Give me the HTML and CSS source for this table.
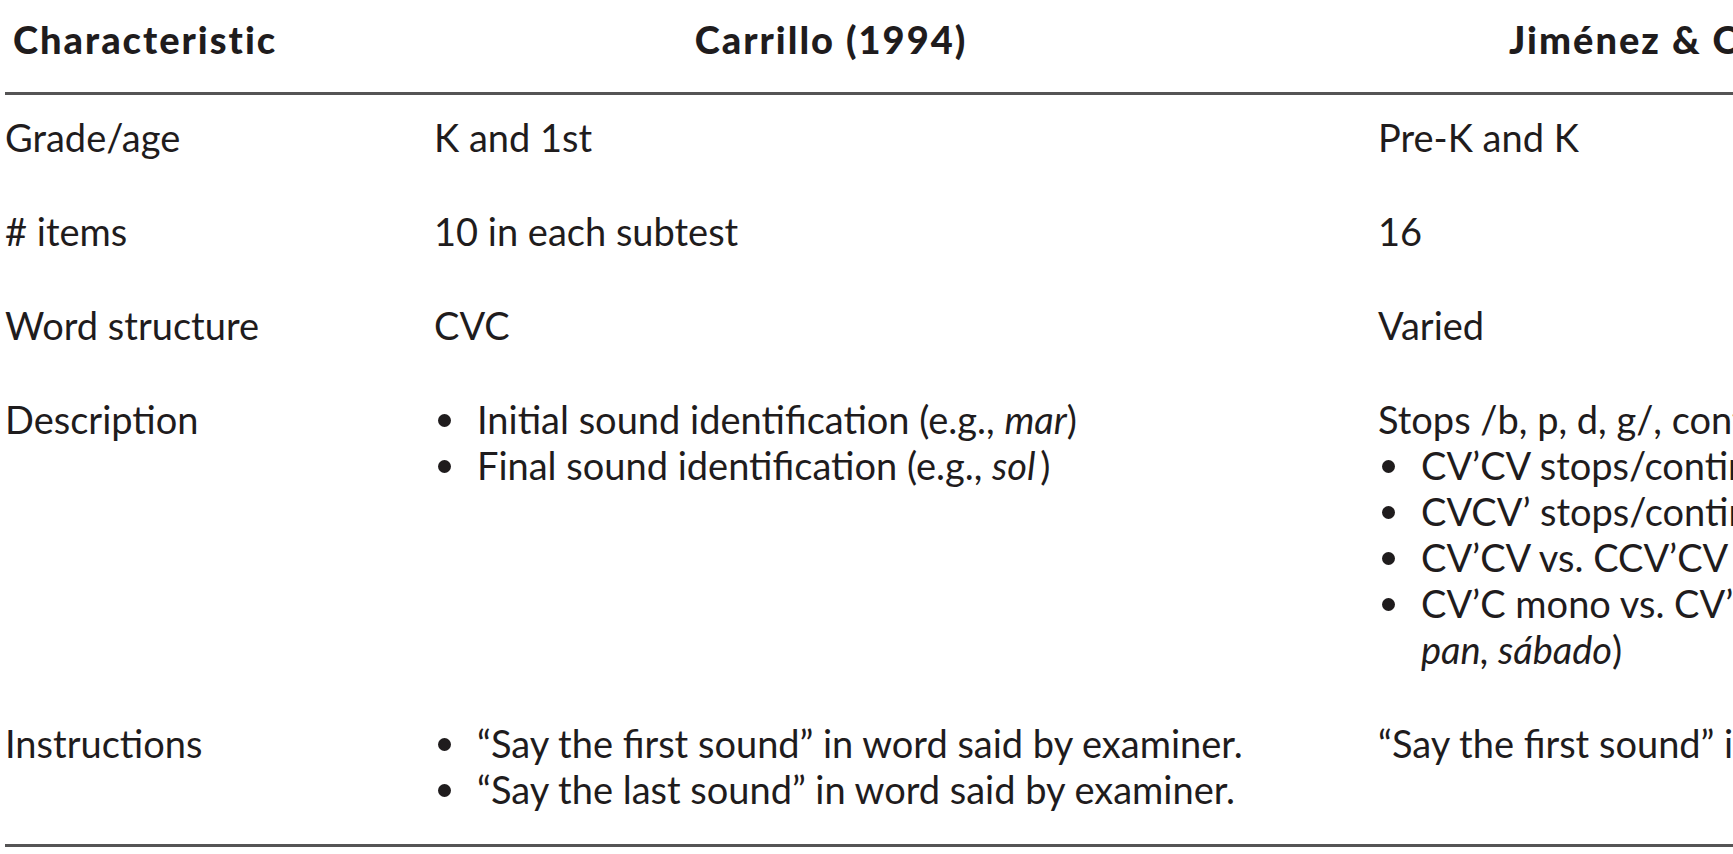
FILE: index.html
```html
<!DOCTYPE html>
<html lang="en">
<head>
<meta charset="utf-8">
<title>Phonological awareness measures</title>
<link rel="stylesheet" href="styles.css">
</head>
<body>
<div class="table">
  <div class="row head">
    <div class="cell c1">Characteristic</div>
    <div class="cell c2">Carrillo (1994)</div>
    <div class="cell c3">Jiménez &amp; Ortiz (2000)</div>
  </div>
  <div class="tbody">
    <div class="row">
      <div class="cell c1">Grade/age</div>
      <div class="cell c2">K and 1st</div>
      <div class="cell c3">Pre-K and K</div>
    </div>
    <div class="row">
      <div class="cell c1"># items</div>
      <div class="cell c2">10 in each subtest</div>
      <div class="cell c3">16</div>
    </div>
    <div class="row">
      <div class="cell c1">Word structure</div>
      <div class="cell c2">CVC</div>
      <div class="cell c3">Varied</div>
    </div>
    <div class="row">
      <div class="cell c1">Description</div>
      <div class="cell c2">
        <ul class="bullets">
          <li><span>Initial sound identification (e.g., <i>mar</i>)</span></li>
          <li><span>Final sound identification (e.g., <i>sol</i>&thinsp;)</span></li>
        </ul>
      </div>
      <div class="cell c3">
        <div class="line">Stops /b, p, d, g/, continuants /β, ð, ɣ/</div>
        <ul class="bullets">
          <li><span>CV’CV stops/continuants</span></li>
          <li><span>CVCV’ stops/continuants</span></li>
          <li><span>CV’CV vs. CCV’CV</span></li>
          <li><span>CV’C mono vs. CV’CVCV tri (e.g.,<br><i>pan, sábado</i>)</span></li>
        </ul>
      </div>
    </div>
    <div class="row">
      <div class="cell c1">Instructions</div>
      <div class="cell c2">
        <ul class="bullets">
          <li><span>“Say the first sound” in word said by examiner.</span></li>
          <li><span>“Say the last sound” in word said by examiner.</span></li>
        </ul>
      </div>
      <div class="cell c3">“Say the first sound” in word said by examiner.</div>
    </div>
  </div>
</div>
</body>
</html>
```

FILE: styles.css
```css
html, body {
  margin: 0;
  padding: 0;
  background: #ffffff;
}

body {
  color: #1f1c1d;
  font-family: Lato, "Liberation Sans", sans-serif;
  font-size: 38px;
  line-height: 46px;
  overflow: hidden;
  width: 1733px;
  height: 854px;
}

.table {
  width: 2300px;
  margin-left: 5px;
}

.row {
  display: grid;
  grid-template-columns: 429px 944px 900px;
  white-space: nowrap;
}

.head {
  font-weight: 900;
  letter-spacing: 2px;
  padding: 16px 0 30px;
  border-bottom: 3px solid #555455;
}

.head .c1 {
  padding-left: 8px;
}

.head .c2 {
  text-align: center;
  padding-right: 150px;
}

.head .c3 {
  padding-left: 131px;
}

.tbody {
  display: flex;
  flex-direction: column;
  gap: 48px;
  padding: 19px 0 32px;
  border-bottom: 3px solid #555455;
}

.bullets {
  list-style: none;
  margin: 0;
  padding: 0;
}

.bullets li {
  display: flex;
  align-items: flex-start;
}

.bullets li::before {
  content: "";
  flex: none;
  width: 13px;
  height: 13px;
  border-radius: 50%;
  background: currentColor;
  margin: 18px 26px 0 4px;
}
```
